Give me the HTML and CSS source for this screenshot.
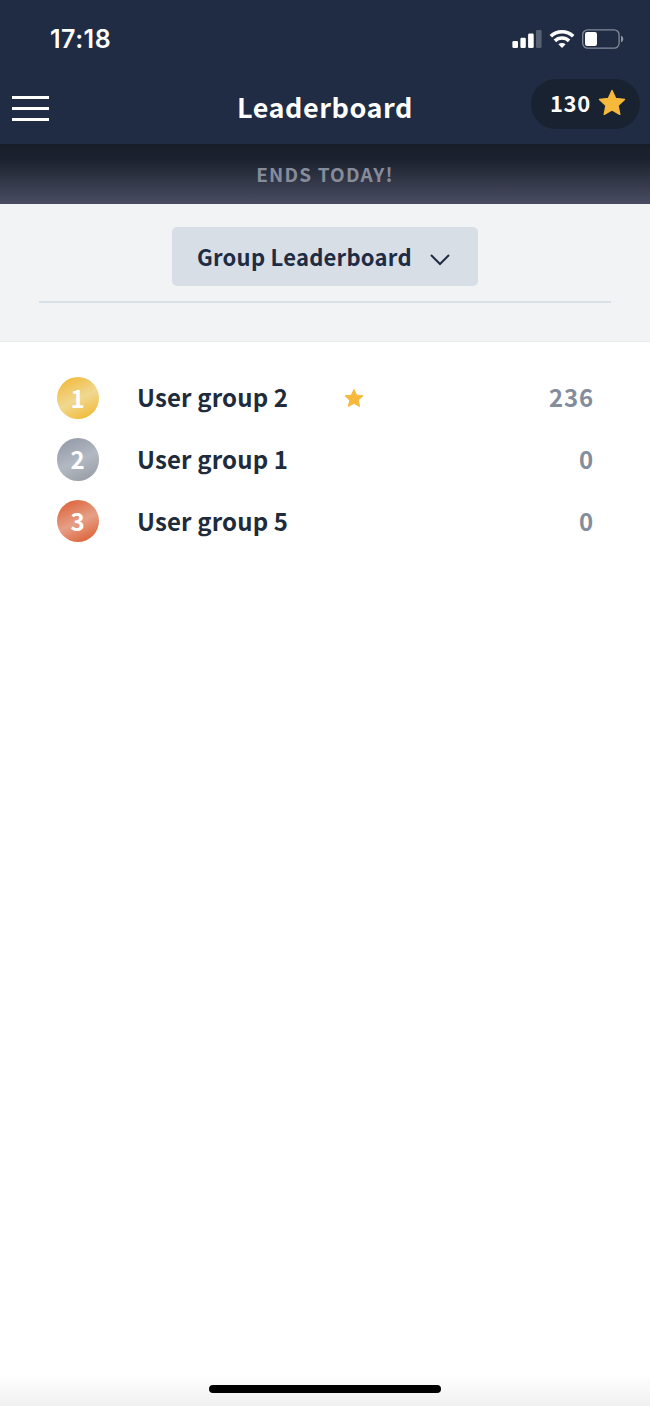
FILE: index.html
```html
<!DOCTYPE html>
<html lang="en">
<head>
    <meta charset="UTF-8">
    <meta name="viewport" content="width=device-width, initial-scale=1.0">
    <title>Leaderboard</title>
    <link rel="stylesheet" href="styles.css">
</head>
<body>
    <div class="app">
        <header class="header">
            <div class="status-bar">
                <span class="time">17:18</span>
                <div class="status-icons">
                    <svg class="signal" width="30" height="19" viewBox="0 0 30 19" fill="#fff">
                        <rect x="0.4" y="12" width="5.6" height="7" rx="1.3"/>
                        <rect x="8.4" y="8.7" width="5.4" height="10.3" rx="1.3"/>
                        <rect x="16.1" y="4.6" width="5.6" height="14.4" rx="1.3"/>
                        <rect x="24" y="1" width="5.6" height="18" rx="1.3" opacity="0.25"/>
                    </svg>
                    <svg class="wifi" width="26" height="19" viewBox="0 0 26 19">
                        <g fill="none" stroke="#fff" stroke-width="3.6">
                            <path d="M1.8 7.2a16.2 16.2 0 0 1 22.4 0"/>
                            <path d="M5.9 11.9a10.2 10.2 0 0 1 14.2 0"/>
                        </g>
                        <path d="M13 19l-3.6-3.7a5.3 5.3 0 0 1 7.2 0z" fill="#fff"/>
                    </svg>
                    <svg class="battery" width="42" height="20" viewBox="0 0 42 20">
                        <rect x="0.7" y="0.8" width="36.4" height="18.4" rx="5" fill="none" stroke="#fff" stroke-opacity="0.45" stroke-width="1.3"/>
                        <rect x="3" y="3" width="12" height="14" rx="2.2" fill="#fff"/>
                        <path d="M39 6.8c3 .8 3 5.6 0 6.4z" fill="#fff" opacity="0.5"/>
                    </svg>
                </div>
            </div>
            <div class="nav-bar">
                <button class="menu-btn" aria-label="Menu">
                    <span></span>
                    <span></span>
                    <span></span>
                </button>
                <h1>Leaderboard</h1>
                <div class="points">
                    <span>130</span>
                    <svg class="star" width="28" height="27" viewBox="0 0 28 27">
                        <path d="M14 1.5l3.7 8 8.8 1-6.5 6 1.8 8.9L14 21l-7.8 4.4L8 16.5l-6.5-6 8.8-1z"/>
                    </svg>
                </div>
            </div>
        </header>

        <div class="banner">ENDS TODAY!</div>

        <div class="filter">
            <button class="select-btn">
                <span>Group Leaderboard</span>
                <svg width="20" height="12" viewBox="0 0 20 12">
                    <path d="M1 1l9 9 9-9"/>
                </svg>
            </button>
            <div class="divider"></div>
        </div>

        <ul class="list">
            <li class="row">
                <span class="rank gold">1</span>
                <span class="name">User group 2</span>
                <svg class="star" width="20" height="20" viewBox="0 0 28 27">
                    <path d="M14 1.5l3.7 8 8.8 1-6.5 6 1.8 8.9L14 21l-7.8 4.4L8 16.5l-6.5-6 8.8-1z"/>
                </svg>
                <span class="score">236</span>
            </li>
            <li class="row">
                <span class="rank silver">2</span>
                <span class="name">User group 1</span>
                <span class="score">0</span>
            </li>
            <li class="row">
                <span class="rank bronze">3</span>
                <span class="name">User group 5</span>
                <span class="score">0</span>
            </li>
        </ul>

        <footer class="footer">
            <div class="home-indicator"></div>
        </footer>
    </div>
</body>
</html>
```
FILE: styles.css
```css
* {
    margin: 0;
    padding: 0;
    box-sizing: border-box;
}

body {
    font-family: 'Noto Sans CJK SC', 'Open Sans', sans-serif;
    font-weight: 700;
    background: white;
}

button {
    font: inherit;
    border: none;
    cursor: pointer;
}

svg {
    display: block;
    flex: none;
}

.app {
    display: flex;
    flex-direction: column;
    height: 1406px;
}

/* Header */
.header {
    height: 144px;
    background: #202c43;
    color: white;
}

.status-bar {
    display: flex;
    justify-content: space-between;
    align-items: center;
    height: 78px;
    padding: 0 26px 0 50px;
}

.time {
    font-family: Inter, sans-serif;
    font-size: 25px;
    font-weight: 600;
    letter-spacing: 0.5px;
}

.status-icons {
    display: flex;
    align-items: center;
}

.signal {
    margin-bottom: 2px;
}

.wifi {
    margin: 0 7px 2px;
}

.nav-bar {
    display: grid;
    grid-template-columns: 1fr auto 1fr;
    align-items: center;
    height: 60px;
    padding: 0 10px 0 12px;
}

.menu-btn {
    display: flex;
    flex-direction: column;
    gap: 8px;
    width: 37px;
    margin-top: 1px;
    background: none;
}

.menu-btn span {
    height: 3px;
    background: white;
}

.nav-bar h1 {
    margin: 0 2px 2px 0;
    font-size: 27px;
    line-height: 40px;
    letter-spacing: 0.55px;
}

.points {
    display: flex;
    align-items: center;
    justify-self: end;
    gap: 7.5px;
    width: 109px;
    height: 50px;
    margin-bottom: 9px;
    padding: 0 0 3px 19px;
    border-radius: 25px;
    background: #192231;
    font-size: 22px;
    letter-spacing: 0.6px;
}

.star {
    fill: #f6b93b;
    stroke: #f6b93b;
    stroke-width: 1.4;
    stroke-linejoin: round;
}

/* Countdown banner */
.banner {
    height: 60px;
    background: linear-gradient(#181e29, #1b212e 25%, #4a4d62);
    color: #868c9a;
    font-size: 19px;
    line-height: 60px;
    letter-spacing: 1.15px;
    text-align: center;
}

/* Filter */
.filter {
    height: 138px;
    padding: 23px 39px 0;
    border-bottom: 1px solid #e6e8ea;
    background: #f2f3f5;
}

.select-btn {
    display: flex;
    align-items: center;
    justify-content: space-between;
    width: 306px;
    height: 59px;
    margin: 0 auto;
    padding: 0 28px 2px 25px;
    border-radius: 5px;
    background: #d8dee6;
    color: #202c43;
    font-size: 22px;
    letter-spacing: 0.25px;
}

.select-btn svg {
    margin-top: 8px;
    fill: none;
    stroke: #202c43;
    stroke-width: 2;
}

.divider {
    height: 2px;
    margin-top: 15px;
    background: #d8e0e8;
}

/* Ranking */
.list {
    flex: 1;
    padding: 25px 56px 0 56.5px;
    list-style: none;
}

.row {
    display: flex;
    align-items: center;
    height: 61.7px;
    color: #202b3c;
    font-size: 24px;
    letter-spacing: 0.15px;
}

.rank {
    width: 42.5px;
    height: 42.5px;
    margin-right: 38px;
    border-radius: 50%;
    color: white;
    line-height: 41px;
    text-align: center;
}

.gold {
    background: linear-gradient(155deg, #f2bd45 12%, #f0d891 52%, #f2bf45 85%);
}

.silver {
    background: linear-gradient(155deg, #999fab 15%, #b3b9c3 52%, #9da1aa 85%);
}

.bronze {
    background: linear-gradient(155deg, #df6d47 15%, #e5a087 52%, #df6c44 85%);
}

.name {
    width: 207px;
    padding-bottom: 2px;
}

.score {
    margin-left: auto;
    padding-bottom: 2px;
    color: #848d9c;
    letter-spacing: 0.8px;
}

.footer {
    display: flex;
    justify-content: center;
    height: 40px;
    padding-top: 19px;
    background: linear-gradient(white 20%, #f0f0f0);
}

.home-indicator {
    width: 232px;
    height: 8px;
    border-radius: 4px;
    background: black;
}
```
